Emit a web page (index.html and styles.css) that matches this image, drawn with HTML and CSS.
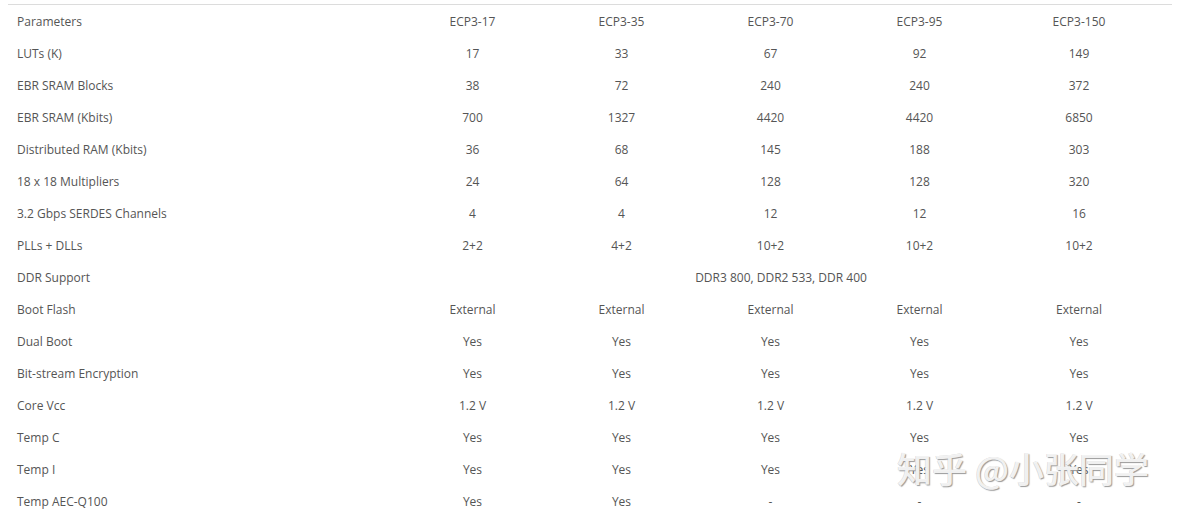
FILE: index.html
```html
<!DOCTYPE html>
<html>
<head>
<meta charset="utf-8">
<link rel="stylesheet" href="styles.css">
</head>
<body>
<table class="spec">
  <colgroup>
    <col class="c-label"><col class="c-val"><col class="c-val"><col class="c-val"><col class="c-val"><col class="c-last">
  </colgroup>
  <tbody>
    <tr><td>Parameters</td><td>ECP3-17</td><td>ECP3-35</td><td>ECP3-70</td><td>ECP3-95</td><td>ECP3-150</td></tr>
    <tr><td>LUTs (K)</td><td>17</td><td>33</td><td>67</td><td>92</td><td>149</td></tr>
    <tr><td>EBR SRAM Blocks</td><td>38</td><td>72</td><td>240</td><td>240</td><td>372</td></tr>
    <tr><td>EBR SRAM (Kbits)</td><td>700</td><td>1327</td><td>4420</td><td>4420</td><td>6850</td></tr>
    <tr><td>Distributed RAM (Kbits)</td><td>36</td><td>68</td><td>145</td><td>188</td><td>303</td></tr>
    <tr><td>18 x 18 Multipliers</td><td>24</td><td>64</td><td>128</td><td>128</td><td>320</td></tr>
    <tr><td>3.2 Gbps SERDES Channels</td><td>4</td><td>4</td><td>12</td><td>12</td><td>16</td></tr>
    <tr><td>PLLs + DLLs</td><td>2+2</td><td>4+2</td><td>10+2</td><td>10+2</td><td>10+2</td></tr>
    <tr><td>DDR Support</td><td colspan="5">DDR3 800, DDR2 533, DDR 400</td></tr>
    <tr><td>Boot Flash</td><td>External</td><td>External</td><td>External</td><td>External</td><td>External</td></tr>
    <tr><td>Dual Boot</td><td>Yes</td><td>Yes</td><td>Yes</td><td>Yes</td><td>Yes</td></tr>
    <tr><td>Bit-stream Encryption</td><td>Yes</td><td>Yes</td><td>Yes</td><td>Yes</td><td>Yes</td></tr>
    <tr><td>Core Vcc</td><td>1.2 V</td><td>1.2 V</td><td>1.2 V</td><td>1.2 V</td><td>1.2 V</td></tr>
    <tr><td>Temp C</td><td>Yes</td><td>Yes</td><td>Yes</td><td>Yes</td><td>Yes</td></tr>
    <tr><td>Temp I</td><td>Yes</td><td>Yes</td><td>Yes</td><td>Yes</td><td>Yes</td></tr>
    <tr><td>Temp AEC-Q100</td><td>Yes</td><td>Yes</td><td>-</td><td>-</td><td>-</td></tr>
  </tbody>
</table>
<div class="watermark">知乎 @小张同学</div>
</body>
</html>
```

FILE: styles.css
```css
html, body {
  margin: 0;
  padding: 0;
  background: #ffffff;
}
body {
  padding: 4px 8px 0 8px;
  font-family: "Open Sans", "Liberation Sans", sans-serif;
  font-size: 12px;
  color: #555555;
  overflow: hidden;
  position: relative;
  height: 517px;
  box-sizing: border-box;
}
.spec {
  width: 1164px;
  border-collapse: collapse;
  table-layout: fixed;
  border-top: 1px solid #dcdcdc;
}
.c-label { width: 390px; }
.c-val { width: 149px; }
.c-last { width: 178px; }
.spec td {
  height: 30px;
  padding: 2px 0 0 0;
  text-align: center;
  vertical-align: middle;
  line-height: 16px;
  white-space: nowrap;
}
.spec td:first-child {
  text-align: left;
  padding-left: 9px;
}
.spec td:last-child {
  padding-right: 8px;
}
.spec td:first-child:last-child { padding-right: 0; }
.watermark {
  position: absolute;
  left: 897px;
  top: 446px;
  font-family: "Noto Sans CJK SC", sans-serif;
  font-size: 35px;
  font-weight: 500;
  line-height: 44px;
  color: rgba(246, 246, 246, 0.95);
  text-shadow: 1px 1px 1px #999999, -0.5px -0.5px 0 rgba(200,200,200,0.7);
  white-space: nowrap;
}
```
